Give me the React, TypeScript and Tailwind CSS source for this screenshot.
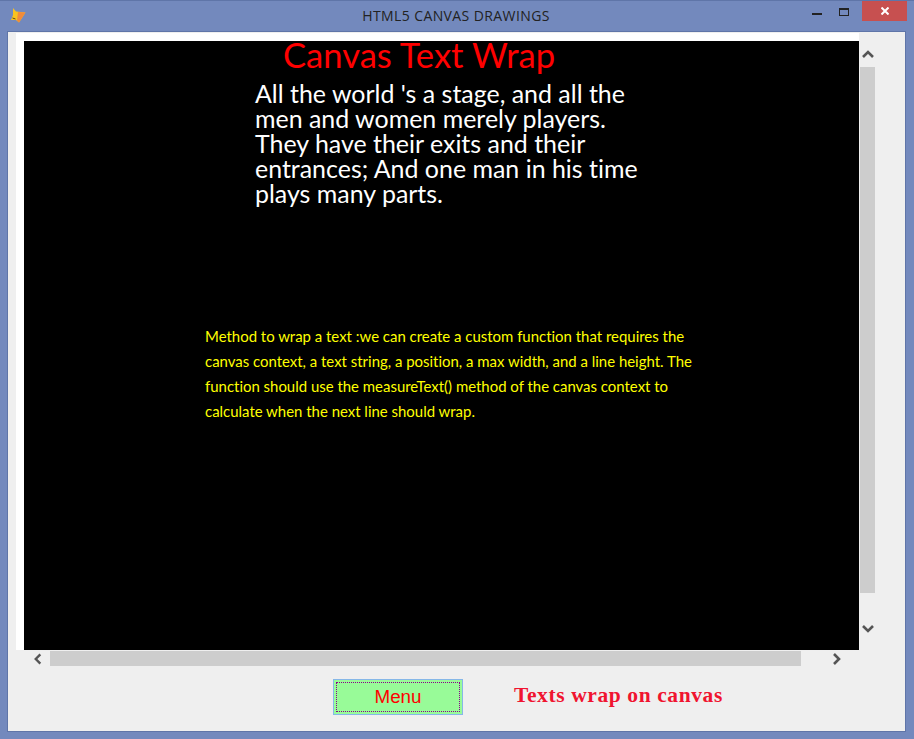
import * as React from 'react';

const POEM = [
  "All the world 's a stage, and all the",
  'men and women merely players.',
  'They have their exits and their',
  'entrances; And one man in his time',
  'plays many parts.',
];

const METHOD = [
  'Method to wrap a text :we can create a custom function that requires the',
  'canvas context, a text string, a position, a max width, and a line height. The',
  'function should use the measureText() method of the canvas context to',
  'calculate when the next line should wrap.',
];

function Chevron({ d }: { d: string }) {
  return (
    <svg width="12" height="12" viewBox="0 0 12 12" fill="none" stroke="#555555" strokeWidth="2.6">
      <path d={d} />
    </svg>
  );
}

function FoxIcon() {
  return (
    <svg width="16" height="16" viewBox="0 0 16 16">
      <path d="M3 1 L6 4.5 L15.5 5.5 L9 15.5 L6 13 L1 13 L3 8 Z" fill="#f9c21f" />
      <path d="M8 5 L15.5 5.5 L9 15.5 L7 13.5 Z" fill="#f08a3c" />
      <path d="M2.5 11 L5.5 12" stroke="#5a4a20" strokeWidth="1" />
    </svg>
  );
}

export default function App() {
  return (
    <div className="w-[914px] h-[739px] bg-[#7389bd] border-t border-t-[#5f75a8] flex flex-col overflow-hidden font-['Lato',sans-serif] [font-variant-ligatures:none]">
      <header className="h-[30px] flex items-start shrink-0">
        <div className="ml-[10px] mt-[6px] w-[16px]"><FoxIcon /></div>
        <div className="flex-1 text-center pt-[6px] pl-[74px] text-[14px] tracking-[0.4px] leading-[18px] text-[#222222] font-['Open_Sans',sans-serif]">
          HTML5 CANVAS DRAWINGS
        </div>
        <div className="flex items-start mr-[7px]">
          <div className="w-[10px] h-[2px] bg-[#222222] mt-[12px] mr-[17px]" />
          <div className="w-[10px] h-[8px] border border-[#222222] border-t-2 mt-[7px] mr-[13px]" />
          <div className="w-[45px] h-[20px] bg-[#c75050] flex items-center justify-center text-white">
            <svg width="8" height="8" viewBox="0 0 8 8" stroke="#ffffff" strokeWidth="2"><path d="M0.5 0.5 L7.5 7.5 M7.5 0.5 L0.5 7.5" /></svg>
          </div>
        </div>
      </header>

      <div className="ml-[7px] mr-[7px] w-[899px] h-[701px] bg-[#efefef] border-l border-r border-t border-b border-[#5f75a8] flex flex-col">
        <div className="flex pt-[1px] pl-[8px] h-[635px]">
          <div className="w-[843px] h-[617px] bg-white pl-[8px] pt-[8px] shrink-0">
            <main className="w-[835px] h-[609px] bg-black">
              <h1 className="ml-[259px] text-[34.6px] leading-[28px] text-[#ff0000]">Canvas Text Wrap</h1>
              <div className="ml-[231px] mt-[12px] text-[24.95px] leading-[25px] text-white whitespace-nowrap">
                {POEM.map((line) => <div key={line}>{line}</div>)}
              </div>
              <div className="ml-[181px] mt-[118px] text-[14.95px] leading-[25px] text-[#ffff00] whitespace-nowrap">
                {METHOD.map((line) => <div key={line}>{line}</div>)}
              </div>
            </main>
          </div>
          <div className="w-[15px] ml-[1px] flex flex-col items-center">
            <div className="h-[34px] flex items-center justify-center pt-[9px]"><Chevron d="M1 8 L6 3 L11 8" /></div>
            <div className="w-[15px] h-[526px] bg-[#cdcdcd]" />
            <div className="h-[70px] flex items-center justify-center"><Chevron d="M1 4 L6 9 L11 4" /></div>
          </div>
        </div>

        <div className="h-[15px] -mt-[16px] ml-[25px] w-[817px] flex items-center">
          <div className="w-[17px] flex justify-center pr-[6px]"><Chevron d="M8 1 L3 6 L8 11" /></div>
          <div className="w-[751px] h-[15px] bg-[#cdcdcd]" />
          <div className="flex-1 flex justify-center pl-[20px]"><Chevron d="M4 1 L9 6 L4 11" /></div>
        </div>

        <div className="flex items-start ml-[325px] mt-[13px]">
          <button className="w-[130px] h-[36px] bg-[#98fb98] border border-[#86b7e8] p-[2px] text-[18.8px] leading-none text-[#ff0000] font-['Liberation_Sans',sans-serif]">
            <span className="flex items-center justify-center w-full h-full border border-dotted border-[#8a008a] pt-[1px]">Menu</span>
          </button>
          <div className="ml-[51px] mt-[3px] text-[21.5px] tracking-[0.6px] leading-[26px] font-bold text-[#f0142f] font-['Liberation_Serif',serif] whitespace-nowrap">
            Texts wrap on canvas
          </div>
        </div>
      </div>
    </div>
  );
}
